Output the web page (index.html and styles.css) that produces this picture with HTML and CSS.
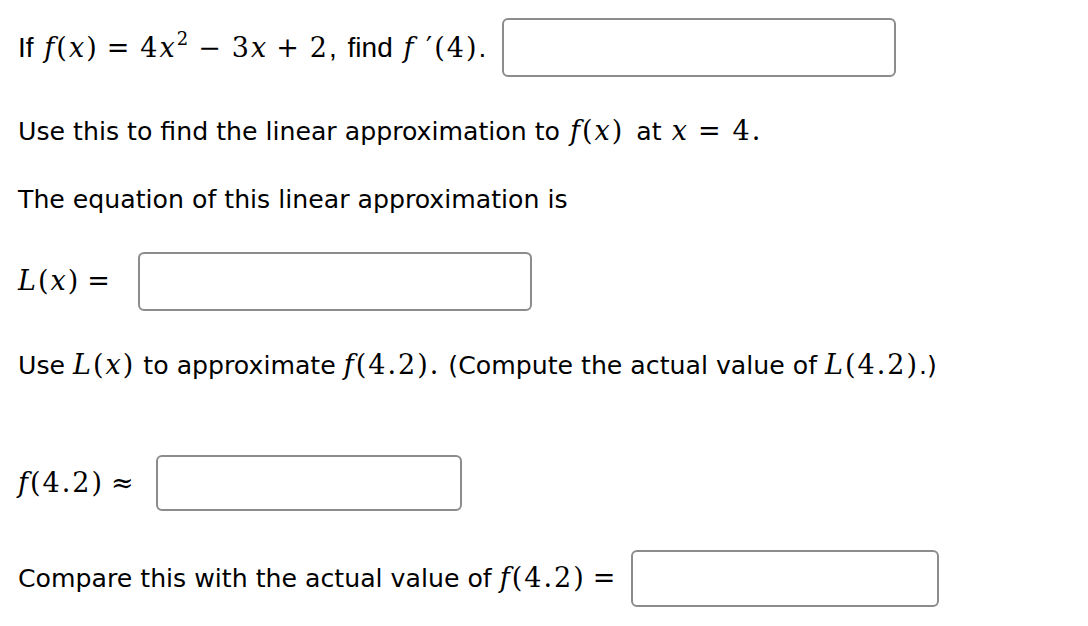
FILE: index.html
```html
<!DOCTYPE html>
<html>
<head>
<meta charset="utf-8">
<link rel="stylesheet" href="styles.css">
</head>
<body>
<div class="page">
  <div class="row r1">
    <p class="line arial">If <span class="m"><i>f</i>(<i>x</i>)<span class="rel">=</span>4<i>x</i><sup>2</sup><span class="bin">−</span>3<i>x</i><span class="bin">+</span>2</span>, find <span class="m"><i>f</i> ′(4)</span>.</p>
    <span class="box b1"></span>
  </div>
  <div class="row r2">
    <p class="line">Use this to find the linear approximation to <span class="m"><i>f</i>(<i>x</i>)</span> at <span class="m"><i>x</i><span class="rel">=</span>4.</span></p>
  </div>
  <div class="row r3">
    <p class="line">The equation of this linear approximation is</p>
  </div>
  <div class="row r4">
    <p class="line"><span class="m"><i>L</i>(<i>x</i>)<span class="rel">=</span></span></p>
    <span class="box b2"></span>
  </div>
  <div class="row r5">
    <p class="line">Use <span class="m"><i>L</i>(<i>x</i>)</span> to approximate <span class="m"><i>f</i>(4.2).</span> (Compute the actual value of <span class="m"><i>L</i>(4.2)</span>.)</p>
  </div>
  <div class="row r6">
    <p class="line"><span class="m"><i>f</i>(4.2)<span class="rel">≈</span></span></p>
    <span class="box b3"></span>
  </div>
  <div class="row r7">
    <p class="line">Compare this with the actual value of <span class="m"><i>f</i>(4.2)<span class="rel">=</span></span></p>
    <span class="box b4"></span>
  </div>
</div>
</body>
</html>
```

FILE: styles.css
```css
html, body {
  margin: 0;
  padding: 0;
  background: #ffffff;
  color: #000000;
}
.page {
  padding: 0 0 0 18px;
  display: flex;
  flex-direction: column;
  align-items: flex-start;
}
.row {
  display: flex;
  align-items: center;
}
.line {
  margin: 0;
  white-space: nowrap;
  font-family: "DejaVu Sans", Verdana, sans-serif;
  font-size: 25.2px;
  line-height: 30px;
}
.line.arial {
  font-family: "Liberation Sans", Arial, sans-serif;
  font-size: 28px;
  word-spacing: 3px;
}
.m {
  font-family: "DejaVu Serif", "Liberation Serif", serif;
  font-size: 27px;
  letter-spacing: 2px;
  word-spacing: 0;
}
.m i {
  font-style: italic;
}
.m sup {
  font-size: 18px;
  line-height: 0;
  vertical-align: 12px;
}
.rel {
  padding: 0 8px 0 7px;
}
.bin {
  padding: 0 7px 0 6px;
}
.r1 .rel,
.r1 .bin {
  padding: 0 9px 0 8px;
}
.r2 .m {
  margin: 0 4px 0 2px;
}
.r2 .rel {
  padding: 0 10px 0 9px;
}
.box {
  display: block;
  border: 2px solid #8c8c8c;
  border-radius: 6px;
  box-sizing: border-box;
  background: #fff;
}
.r1 { margin-top: 18px; height: 59px; }
.r2 { margin-top: 39px; height: 30px; }
.r3 { margin-top: 39px; height: 30px; }
.r4 { margin-top: 37px; height: 59px; }
.r5 { margin-top: 39px; height: 30px; }
.r6 { margin-top: 75px; height: 56px; }
.r7 { margin-top: 39px; height: 57px; }
.b1 { width: 394px; height: 59px; margin-left: 16px; }
.b2 { width: 394px; height: 59px; margin-left: 18px; }
.b3 { width: 306px; height: 56px; margin-left: 12px; }
.b4 { width: 308px; height: 57px; margin-left: 6px; }
```
